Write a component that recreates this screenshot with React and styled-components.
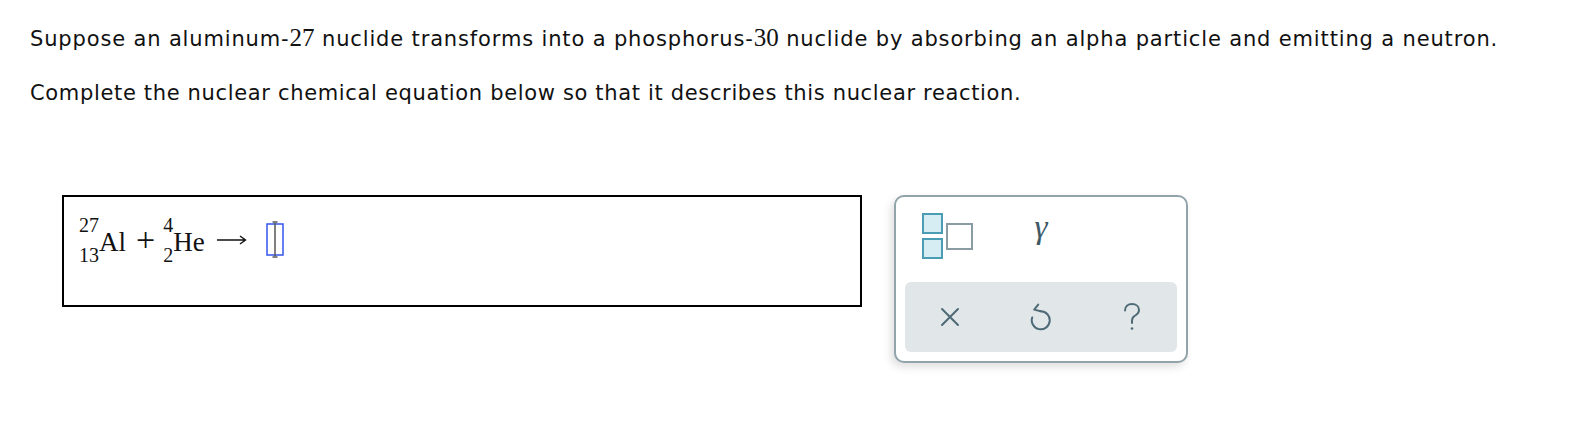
import React from 'react'
import styled, { createGlobalStyle } from 'styled-components'

const GlobalStyle = createGlobalStyle`
  html, body {
    margin: 0;
    padding: 0;
    background: #fff;
  }
  body {
    font-family: 'DejaVu Sans', Verdana, sans-serif;
    color: #111;
  }
`

const Page = styled.div`
  padding: 26px 30px;
`

const Prompt = styled.p`
  margin: 0 0 ${props => props.gap}px;
  font-size: 21px;
  line-height: 24px;
  letter-spacing: ${props => props.spacing}px;
  white-space: nowrap;
`

const Num = styled.span`
  font-family: 'Liberation Serif', 'Times New Roman', serif;
  font-size: 25px;
  letter-spacing: 0;
`

const Workspace = styled.div`
  display: flex;
  align-items: flex-start;
  gap: 32px;
  margin-left: 32px;
`

const AnswerBox = styled.div`
  box-sizing: border-box;
  width: 800px;
  height: 112px;
  border: 2px solid #000;
  padding: 18px 15px;
`

const Equation = styled.div`
  display: flex;
  align-items: center;
  font-family: 'Liberation Serif', 'Times New Roman', serif;
  color: #111;
`

const Nuclide = styled.span`
  display: inline-flex;
  align-items: center;
`

const Scripts = styled.span`
  display: inline-flex;
  flex-direction: column;
  align-items: flex-end;
  gap: 10px;
  font-size: 20px;
  line-height: 1;
`

const Symbol = styled.span`
  font-size: 27px;
  line-height: 1;
  margin-top: 4px;
`

const Operator = styled.span`
  font-size: 34px;
  line-height: 1;
  margin: 0 8px 0 10px;
`

const Arrow = styled.svg`
  margin: 0 19px 0 12px;
  flex: none;
`

const Slot = styled.svg`
  flex: none;
`

const Palette = styled.div`
  box-sizing: border-box;
  width: 294px;
  height: 168px;
  border: 2px solid #91a4ab;
  border-radius: 10px;
  padding: 0 9px 9px;
  display: flex;
  flex-direction: column;
  box-shadow: -3px 4px 8px rgba(0, 0, 0, 0.13);
  background: #fff;
`

const ToolRow = styled.div`
  flex: 1;
  display: grid;
  grid-template-columns: repeat(3, 1fr);
  align-items: center;
  justify-items: center;
  padding-bottom: 6px;
`

const ActionBar = styled.div`
  height: 70px;
  border-radius: 6px;
  background: #e1e6e8;
  display: grid;
  grid-template-columns: repeat(3, 1fr);
  align-items: center;
  justify-items: center;
`

const Gamma = styled.span`
  font-family: 'Liberation Serif', 'Times New Roman', serif;
  font-style: italic;
  font-size: 33px;
  line-height: 1;
  color: #3c5965;
  margin-top: -18px;
`

const IconButton = styled.button`
  border: none;
  background: transparent;
  padding: 0;
  display: flex;
  align-items: center;
  justify-content: center;
  color: #4d6a76;
  cursor: pointer;
  margin-left: ${props => props.shift || 0}px;
`

const TemplateIcon = () => (
  <svg width="52" height="47" viewBox="0 0 52 47">
    <rect x="1" y="1" width="19" height="19" fill="#d6eef3" stroke="#4a9db4" strokeWidth="2" />
    <rect x="1" y="26" width="19" height="19" fill="#d6eef3" stroke="#4a9db4" strokeWidth="2" />
    <rect x="25" y="11" width="25" height="25" fill="#fff" stroke="#8a9ca3" strokeWidth="2" />
  </svg>
)

const ClearIcon = () => (
  <svg width="20" height="20" viewBox="0 0 20 20" fill="none" stroke="currentColor" strokeWidth="2" strokeLinecap="round">
    <path d="M2 2 L18 18 M18 2 L2 18" />
  </svg>
)

const UndoIcon = () => (
  <svg width="22" height="28" viewBox="6 6 22 28" fill="none" stroke="currentColor" strokeWidth="2" strokeLinecap="round" strokeLinejoin="round">
    <path d="M16.7 14.3 A9 9 0 1 1 8.2 20.5" />
    <path d="M14.2 7.6 L10.2 12.6 L16.7 14.3" />
  </svg>
)

const HelpIcon = () => (
  <svg width="22" height="30" viewBox="0 0 22 30" fill="none" stroke="currentColor" strokeWidth="2" strokeLinecap="round">
    <path d="M4 8.5 C4 4.5 7 2 11 2 C15 2 18 4.5 18 8 C18 11 16 12.5 13.5 14 C11.8 15 11 16.5 11 19 V21" />
    <circle cx="11" cy="26.5" r="1.3" fill="currentColor" stroke="none" />
  </svg>
)

const App = () => {
  return (
    <Page>
      <GlobalStyle />
      <Prompt gap={30} spacing={0.85}>
        Suppose an aluminum-<Num>27</Num> nuclide transforms into a phosphorus-<Num>30</Num> nuclide by absorbing an alpha particle and emitting a neutron.
      </Prompt>
      <Prompt gap={90} spacing={0.66}>
        Complete the nuclear chemical equation below so that it describes this nuclear reaction.
      </Prompt>
      <Workspace>
        <AnswerBox>
          <Equation>
            <Nuclide>
              <Scripts>
                <span>27</span>
                <span>13</span>
              </Scripts>
              <Symbol>Al</Symbol>
            </Nuclide>
            <Operator>+</Operator>
            <Nuclide>
              <Scripts>
                <span>4</span>
                <span>2</span>
              </Scripts>
              <Symbol>He</Symbol>
            </Nuclide>
            <Arrow width="30" height="12" viewBox="0 0 30 12" fill="none" stroke="#111" strokeWidth="1.4">
              <path d="M0 6 H28 M23 2 L28.5 6 L23 10" />
            </Arrow>
            <Slot width="18" height="40" viewBox="0 0 18 40">
              <rect x="1" y="4" width="16" height="31" fill="none" stroke="#3355ee" strokeWidth="1.5" />
              <path d="M9 3 V36 M6.5 2 H11.5 M6.5 37 H11.5" stroke="#555" strokeWidth="1.5" />
            </Slot>
          </Equation>
        </AnswerBox>
        <Palette>
          <ToolRow>
            <IconButton shift={-4}><TemplateIcon /></IconButton>
            <Gamma>γ</Gamma>
            <span />
          </ToolRow>
          <ActionBar>
            <IconButton><ClearIcon /></IconButton>
            <IconButton><UndoIcon /></IconButton>
            <IconButton><HelpIcon /></IconButton>
          </ActionBar>
        </Palette>
      </Workspace>
    </Page>
  )
}

export default App
